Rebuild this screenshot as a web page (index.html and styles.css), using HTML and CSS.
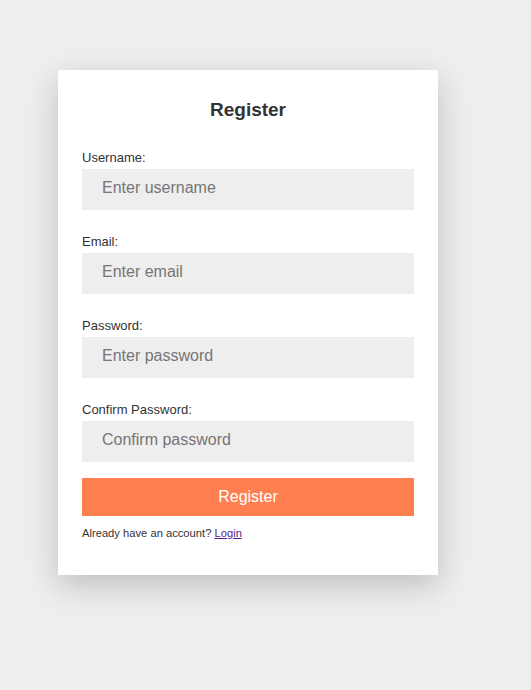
FILE: index.html
```html
<!DOCTYPE html>
<html lang="en">
<head>
    <meta charset="UTF-8">
    <meta name="viewport" content="width=device-width, initial-scale=1.0">
    <title>Register</title>
    <link rel="stylesheet" href="styles.css">
</head>
<body>

    <div class="container">
        <h2>Register</h2>

        <form>
            <div class="form-group">
                <label for="username">Username:</label>
                <input type="text" id="username" placeholder="Enter username">
            </div>
            <div class="form-group">
                <label for="email">Email:</label>
                <input type="email" id="email" placeholder="Enter email">
            </div>
            <div class="form-group">
                <label for="password">Password:</label>
                <input type="password" id="password" placeholder="Enter password">
            </div>
            <div class="form-group">
                <label for="confirm">Confirm Password:</label>
                <input type="password" id="confirm" placeholder="Confirm password">
            </div>

            <button type="submit" class="register-btn">Register</button>
        </form>

        <p class="login-text">Already have an account? <a href="#">Login</a></p>
    </div>

</body>
</html>
```

FILE: styles.css
```css
* {
    margin: 0;
    padding: 0;
    box-sizing: border-box;
}

body {
    font-family: 'Liberation Sans', Arial, sans-serif;
    background-color: #eeeeee;
    padding: 70px 0 0 58px;
    min-height: 100vh;
}

.container {
    background: white;
    width: 380px;
    padding: 29px 24px 35px;
    box-shadow: 0 10px 30px rgba(0, 0, 0, 0.2);
}

h2 {
    text-align: center;
    color: #333;
    font-size: 19px;
    line-height: 22px;
    margin-bottom: 29px;
}

.form-group {
    margin-bottom: 24px;
}

.form-group:last-of-type {
    margin-bottom: 16px;
}

label {
    display: block;
    font-size: 13px;
    line-height: 15px;
    color: #333;
    margin-bottom: 4px;
}

input {
    display: block;
    width: 100%;
    height: 41px;
    padding: 0 20px 3px;
    border: none;
    background: #eeeeee;
    font-family: inherit;
    font-size: 16px;
    color: #333;
}

input::placeholder {
    color: #757575;
}

.register-btn {
    display: block;
    width: 100%;
    height: 38px;
    background: #ff7f50;
    color: white;
    border: none;
    font-family: inherit;
    font-size: 16px;
    cursor: pointer;
}

.register-btn:hover {
    background: #ff6a33;
}

.login-text {
    margin-top: 11px;
    font-size: 11.2px;
    line-height: 13px;
    color: #333;
}

.login-text a {
    color: #551a8b;
}
```
